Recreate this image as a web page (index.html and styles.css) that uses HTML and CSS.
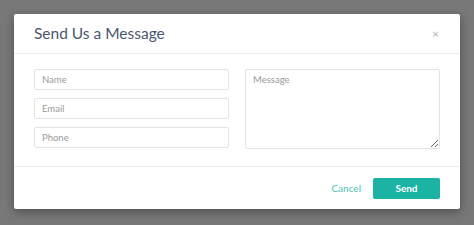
FILE: index.html
```html
<!DOCTYPE html>
<html lang="en">
<head>
    <meta charset="UTF-8">
    <meta name="viewport" content="width=device-width, initial-scale=1.0">
    <title>Send Us a Message</title>
    <link rel="stylesheet" href="styles.css">
</head>
<body>
    <div class="modal">
        <div class="modal-header">
            <h2>Send Us a Message</h2>
            <span class="close">&times;</span>
        </div>
        <form class="modal-body">
            <div class="fields">
                <input type="text" placeholder="Name">
                <input type="email" placeholder="Email">
                <input type="text" placeholder="Phone">
            </div>
            <textarea placeholder="Message"></textarea>
        </form>
        <div class="modal-footer">
            <button type="button" class="cancel">Cancel</button>
            <button type="button" class="send">Send</button>
        </div>
    </div>
</body>
</html>
```

FILE: styles.css
```css
body {
    font-family: Lato, "Open Sans", sans-serif;
    background-color: #787878;
    margin: 0;
    padding: 14px;
}

.modal {
    background-color: #fff;
    width: 446px;
    border-radius: 2px;
    box-shadow: 0 3px 10px rgba(0, 0, 0, 0.35);
}

.modal-header {
    display: flex;
    justify-content: space-between;
    align-items: center;
    height: 39px;
    padding: 0 20px;
    border-bottom: 1px solid #ececec;
}

.modal-header h2 {
    margin: 0 0 1px;
    font-size: 15.5px;
    font-weight: 400;
    color: #4b5770;
}

.close {
    color: #b5b5b5;
    font-size: 12px;
    margin-right: 1px;
    cursor: pointer;
}

.modal-body {
    display: flex;
    gap: 16px;
    padding: 15px 20px 17px;
    margin: 0;
    border-bottom: 1px solid #ececec;
}

.fields {
    display: flex;
    flex-direction: column;
    gap: 8px;
    width: 195px;
}

.fields input,
.modal-body textarea {
    box-sizing: border-box;
    font-family: Lato, "Open Sans", sans-serif;
    font-size: 9.5px;
    padding: 0 7px;
    border: 1px solid #e3e3e3;
    border-radius: 2px;
    outline: none;
    color: #555;
}

.fields input {
    height: 21px;
}

.modal-body textarea {
    width: 195px;
    height: 80px;
    padding-top: 4px;
    resize: vertical;
}

::placeholder {
    color: #9a9a9a;
}

.modal-footer {
    display: flex;
    justify-content: flex-end;
    align-items: center;
    gap: 12px;
    height: 42px;
    padding: 0 20px;
}

.modal-footer button {
    font-family: Lato, "Open Sans", sans-serif;
    font-size: 10px;
    border: none;
    cursor: pointer;
}

.cancel {
    background: none;
    color: #4fbfb3;
    padding: 0;
}

.send {
    width: 67px;
    height: 21px;
    background-color: #1bb3a3;
    color: #fff;
    font-weight: 700;
    border-radius: 2px;
}
```
